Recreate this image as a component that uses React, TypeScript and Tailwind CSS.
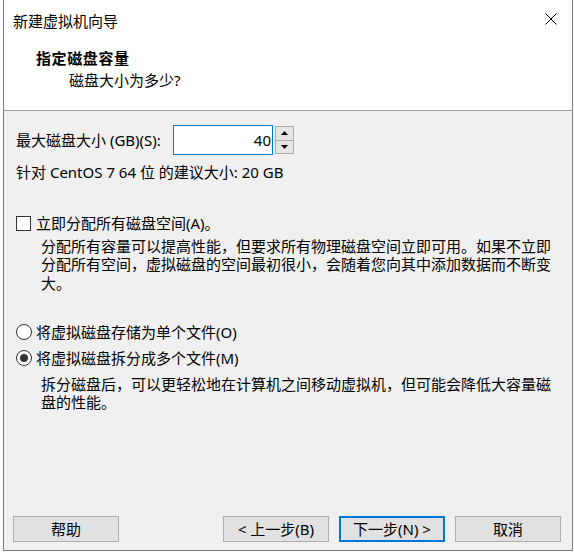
const font = "font-['Noto_Sans','Noto_Sans_CJK_SC',sans-serif]";

function WizButton({ label, primary }: { label: string; primary?: boolean }) {
  return (
    <button
      className={
        "w-[106px] h-[26px] flex items-center justify-center text-[15px] leading-none text-black bg-[#e1e1e1] " +
        (primary ? "border-2 border-[#0078d7]" : "border border-[#adadad]")
      }
    >
      {label}
    </button>
  );
}

function Radio({ checked }: { checked?: boolean }) {
  return (
    <span className="w-[16px] h-[16px] rounded-full border border-[#333333] bg-white flex items-center justify-center shrink-0">
      {checked && <span className="w-[8px] h-[8px] rounded-full bg-[#333333]" />}
    </span>
  );
}

export default function App() {
  return (
    <div className={`w-[574px] h-[552px] bg-white ${font} text-black`}>
      <div className="ml-[3px] w-[570px] h-[551px] border-l border-r border-b border-[#7a7a7a] flex flex-col">
        {/* title bar + header */}
        <div className="h-[111px] bg-white border-b border-[#a0a0a0] flex flex-col">
          <div className="h-[41px] flex items-center justify-between pl-[9px] pr-[15px]">
            <span className="text-[15px] leading-[20px]">新建虚拟机向导</span>
            <svg width="12" height="12" viewBox="0 0 12 12" className="-mt-[3px]">
              <path d="M0.5 0.5 L11.5 11.5 M11.5 0.5 L0.5 11.5" stroke="#000" strokeWidth="1" />
            </svg>
          </div>
          <div className="pt-[7px] pl-[32px] text-[15px] leading-[20px] font-bold tracking-[0.6px]">
            指定磁盘容量
          </div>
          <div className="mt-[2px] pl-[65px] text-[15px] leading-[20px]">磁盘大小为多少?</div>
        </div>

        {/* body */}
        <div className="flex-1 bg-[#f0f0f0] flex flex-col pl-[12px] text-[15px]">
          <div className="mt-[14px] flex items-center h-[30px]">
            <span className="w-[157px] leading-[20px]">最大磁盘大小 (GB)(S):</span>
            <div className="w-[100px] h-[30px] border border-[#0078d7] bg-white flex items-center justify-end pr-[1px] leading-none">
              40
            </div>
            <div className="ml-[2px] w-[19px] h-[28px] flex flex-col border border-[#adadad] bg-[#e5e5e5]">
              <div className="flex-1 flex items-center justify-center border-b border-[#adadad]">
                <svg width="7" height="4" viewBox="0 0 7 4">
                  <path d="M0 4 L3.5 0 L7 4 Z" fill="#000" />
                </svg>
              </div>
              <div className="flex-1 flex items-center justify-center">
                <svg width="7" height="4" viewBox="0 0 7 4">
                  <path d="M0 0 L3.5 4 L7 0 Z" fill="#000" />
                </svg>
              </div>
            </div>
          </div>

          <div className="mt-[7px] leading-[20px]">针对 CentOS 7 64 位 的建议大小: 20 GB</div>

          <div className="mt-[31px] flex items-center h-[20px] gap-[5px]">
            <span className="w-[15px] h-[15px] border border-[#333333] bg-white shrink-0" />
            <span className="leading-[20px]">立即分配所有磁盘空间(A)。</span>
          </div>
          <p className="mt-[4px] pl-[25px] leading-[18.3px]">
            分配所有容量可以提高性能，但要求所有物理磁盘空间立即可用。如果不立即
            <br />
            分配所有空间，虚拟磁盘的空间最初很小，会随着您向其中添加数据而不断变
            <br />
            大。
          </p>

          <div className="mt-[30px] flex items-center h-[20px] gap-[4px]">
            <Radio />
            <span className="leading-[20px]">将虚拟磁盘存储为单个文件(O)</span>
          </div>
          <div className="mt-[6px] flex items-center h-[20px] gap-[4px]">
            <Radio checked />
            <span className="leading-[20px]">将虚拟磁盘拆分成多个文件(M)</span>
          </div>
          <p className="mt-[7px] pl-[25px] leading-[18.3px]">
            拆分磁盘后，可以更轻松地在计算机之间移动虚拟机，但可能会降低大容量磁
            <br />
            盘的性能。
          </p>

          <div className="mt-auto mb-[8px] -ml-[3px] pr-[11px] flex items-center">
            <WizButton label="帮助" />
            <div className="ml-auto flex gap-[10px]">
              <WizButton label="< 上一步(B)" />
              <WizButton label="下一步(N) >" primary />
              <WizButton label="取消" />
            </div>
          </div>
        </div>
      </div>
    </div>
  );
}
